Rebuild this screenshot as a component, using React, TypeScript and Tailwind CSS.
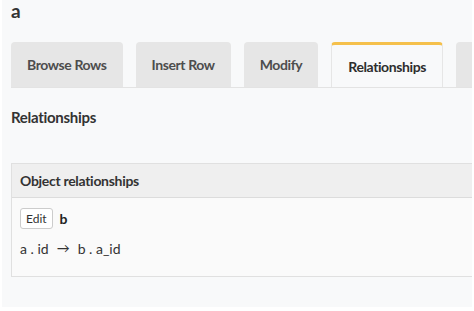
import React from 'react';

const tabs = ['Browse Rows', 'Insert Row', 'Modify', 'Relationships', 'Permissions'];

export default function App() {
  const active = 'Relationships';
  return (
    <div className="w-[474px] h-[311px] bg-white overflow-hidden" style={{ fontFamily: 'Lato, "Open Sans", sans-serif' }}>
      <div className="ml-[2px] w-[470px] h-[307px] bg-[#f8f9fa] overflow-hidden pl-[9px]">
        {/* title */}
        <div className="h-[42px] text-[19px] font-bold text-[#333] leading-[22px]">a</div>

        {/* tabs */}
        <div className="flex gap-[13px] border-b border-[#e3e3e3] w-[600px]">
          {tabs.map((tab) => (
            <div
              key={tab}
              className={`h-[45px] px-[16px] flex items-center rounded-t-[4px] text-[14px] font-bold tracking-[-0.4px] whitespace-nowrap shrink-0 ${
                tab === active
                  ? 'bg-[#f8f9fa] text-[#2d2d2d] border-t-[3px] border-x border-t-[#f5c04b] border-x-[#e6e6e6] -mb-px pt-[1px]'
                  : 'bg-[#e6e6e6] text-[#4d4d4d]'
              }`}
            >
              {tab}
            </div>
          ))}
        </div>

        {/* section */}
        <div className="mt-[19px] text-[15px] font-bold text-[#333] leading-[20px] tracking-[-0.3px]">Relationships</div>

        <div className="mt-[36px] w-[600px] border border-[#e0e0e0]">
          <div className="h-[34px] bg-[#efefef] border-b border-[#dcdcdc] flex items-center pl-[8px] text-[14px] font-bold text-[#333] tracking-[-0.3px]">
            Object relationships
          </div>
          <div className="bg-[#fafafa] h-[78px] pl-[8px] pt-[10px]">
            <div className="flex items-center gap-[7px]">
              <button className="h-[21px] px-[5px] bg-white border border-[#cccccc] rounded-[3px] text-[12px] text-[#333] leading-none">
                Edit
              </button>
              <span className="text-[14px] font-bold text-[#222]">b</span>
            </div>
            <div className="mt-[9px] text-[14px] text-[#333] flex items-center whitespace-pre">
              <span>a . id</span>
              <span className="mx-[8px] text-[13px]">→</span>
              <span>b . a_id</span>
            </div>
          </div>
        </div>
      </div>
    </div>
  );
}
